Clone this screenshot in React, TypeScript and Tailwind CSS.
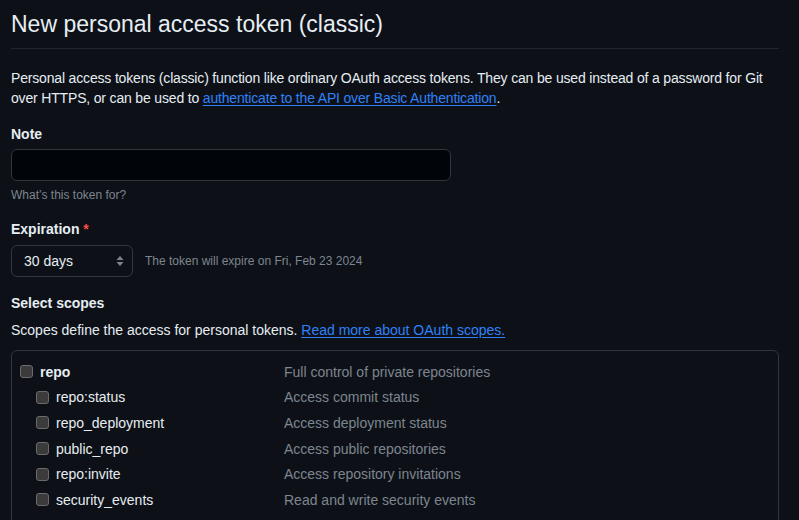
const scopes = [
  { name: 'repo', desc: 'Full control of private repositories', parent: true },
  { name: 'repo:status', desc: 'Access commit status' },
  { name: 'repo_deployment', desc: 'Access deployment status' },
  { name: 'public_repo', desc: 'Access public repositories' },
  { name: 'repo:invite', desc: 'Access repository invitations' },
  { name: 'security_events', desc: 'Read and write security events' },
]

function Checkbox() {
  return <span className="inline-block w-[13px] h-[13px] shrink-0 rounded-[3px] border border-[#6b6b6b] bg-[#3b3b3b]" />
}

export default function App() {
  return (
    <div
      className="min-h-screen bg-[#0d1117] text-[#e6edf3] text-sm px-[11px] overflow-hidden"
      style={{ fontFamily: '"Liberation Sans", Arial, sans-serif' }}
    >
      <div className="w-[768px]">
        {/* Subhead */}
        <h1 className="text-[23px] font-normal leading-[30px] pt-[9px] pb-[9px] border-b border-[#21262d]">
          New personal access token (classic)
        </h1>

        <p className="mt-[19px] leading-[20px] w-[790px] tracking-[-0.17px]">
          Personal access tokens (classic) function like ordinary OAuth access tokens. They can be used instead of a password for Git
          <br />
          over HTTPS, or can be used to{' '}
          <a href="#" className="text-[#2f81f7] underline underline-offset-2">authenticate to the API over Basic Authentication</a>.
        </p>

        {/* Note */}
        <div className="mt-[16px]">
          <label className="block font-semibold leading-[20px]">Note</label>
          <input
            type="text"
            className="mt-[5px] block w-[440px] h-[32px] rounded-md border border-[#30363d] bg-[#010409] px-3 outline-none"
          />
          <p className="mt-[5px] text-xs text-[#7d8590] leading-[18px]">What’s this token for?</p>
        </div>

        {/* Expiration */}
        <div className="mt-[15px]">
          <label className="block font-semibold leading-[20px]">
            Expiration <span className="text-[#f85149]">*</span>
          </label>
          <div className="mt-[6px] flex items-center gap-3">
            <div className="flex items-center justify-between w-[122px] h-[32px] rounded-md border border-[#30363d] bg-[#0d1117] pl-3 pr-2">
              <span>30 days</span>
              <svg width="8" height="12" viewBox="0 0 8 12" className="text-[#7d8590]">
                <path d="M4 1 L7.5 5 H0.5 Z M4 11 L7.5 7 H0.5 Z" fill="currentColor" />
              </svg>
            </div>
            <span className="text-xs text-[#7d8590]">The token will expire on Fri, Feb 23 2024</span>
          </div>
        </div>

        {/* Scopes */}
        <div className="mt-[16px]">
          <div className="font-semibold leading-[20px]">Select scopes</div>
          <p className="mt-[7px] leading-[20px]">
            Scopes define the access for personal tokens.{' '}
            <a href="#" className="text-[#2f81f7] underline underline-offset-2">Read more about OAuth scopes.</a>
          </p>
          <div className="mt-[10px] rounded-md border border-[#30363d] pt-[8px] pb-3">
            {scopes.map((s) => (
              <div key={s.name} className="flex items-center h-[25.6px]">
                <div className={`flex items-center gap-[7px] w-[272px] ${s.parent ? 'pl-[8px]' : 'pl-[24px]'}`}>
                  <Checkbox />
                  <span className={s.parent ? 'font-semibold' : ''}>{s.name}</span>
                </div>
                <span className="text-[#7d8590]">{s.desc}</span>
              </div>
            ))}
          </div>
        </div>
      </div>
    </div>
  )
}
